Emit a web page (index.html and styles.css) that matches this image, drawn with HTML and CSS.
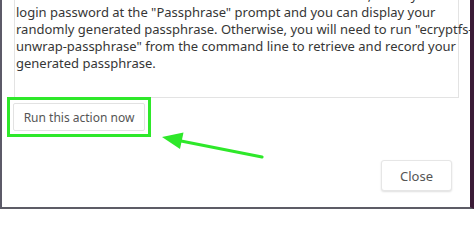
FILE: index.html
```html
<!DOCTYPE html>
<html>
<head>
<meta charset="utf-8">
<link rel="stylesheet" href="styles.css">
</head>
<body>
<div class="screen">
  <div class="message">
    <span class="line">When the home folder is locked at the start of the session, enter your</span>
    <span class="line">login password at the "Passphrase" prompt and you can display your</span>
    <span class="line">randomly generated passphrase. Otherwise, you will need to run "ecryptfs-</span>
    <span class="line">unwrap-passphrase" from the command line to retrieve and record your</span>
    <span class="line">generated passphrase.</span>
  </div>
  <div class="highlight">
    <button class="run-btn">Run this action now</button>
  </div>
  <div class="footer">
    <button class="close-btn">Close</button>
  </div>
  <svg class="arrow" width="474" height="209" viewBox="0 0 474 209">
    <line x1="262" y1="157" x2="176" y2="140" stroke="#2ee82a" stroke-width="3.2" stroke-linecap="round"/>
    <polygon points="162,137 183.5,132.5 180,149" fill="#2ee82a"/>
  </svg>
</div>
</body>
</html>
```
FILE: styles.css
```css
html, body {
  margin: 0;
  padding: 0;
  background: #ffffff;
}

.screen {
  position: relative;
  box-sizing: border-box;
  width: 474px;
  height: 209px;
  overflow: hidden;
  display: flex;
  flex-direction: column;
  background: #ffffff;
  border-left: 2px solid #5c5a68;
  border-right: 4px solid #3b1a36;
  border-bottom: 2px solid #5d5c66;
  font-family: "Noto Sans", "Open Sans", sans-serif;
}

.message {
  margin: -13px 11px 0 12px;
  padding: 0 4px 25px 1px;
  border: 1px solid #e3e3e3;
  border-top: none;
  font-size: 13px;
  line-height: 17px;
  color: #363636;
}

.line {
  display: block;
  white-space: nowrap;
}

.highlight {
  align-self: flex-start;
  margin: -1px 0 0 5px;
  padding: 3px;
  border: 3px solid #2ee82a;
}

.run-btn {
  display: block;
  width: 132px;
  height: 28px;
  padding: 0;
  border: 1px solid #e2e2e2;
  border-radius: 2px;
  background: #ffffff;
  font-family: "Noto Sans", "Open Sans", sans-serif;
  font-size: 12px;
  color: #555555;
}

.footer {
  margin-top: auto;
  display: flex;
  justify-content: flex-end;
  padding: 0 18px 16px 0;
}

.close-btn {
  width: 71px;
  height: 31px;
  border: 1px solid #e6e6e6;
  border-radius: 3px;
  background: #ffffff;
  box-shadow: 0 1px 2px rgba(0, 0, 0, 0.13);
  font-family: "Noto Sans", "Open Sans", sans-serif;
  font-size: 13px;
  color: #555555;
}

.arrow {
  position: absolute;
  left: -2px;
  top: 0;
  pointer-events: none;
}
```
